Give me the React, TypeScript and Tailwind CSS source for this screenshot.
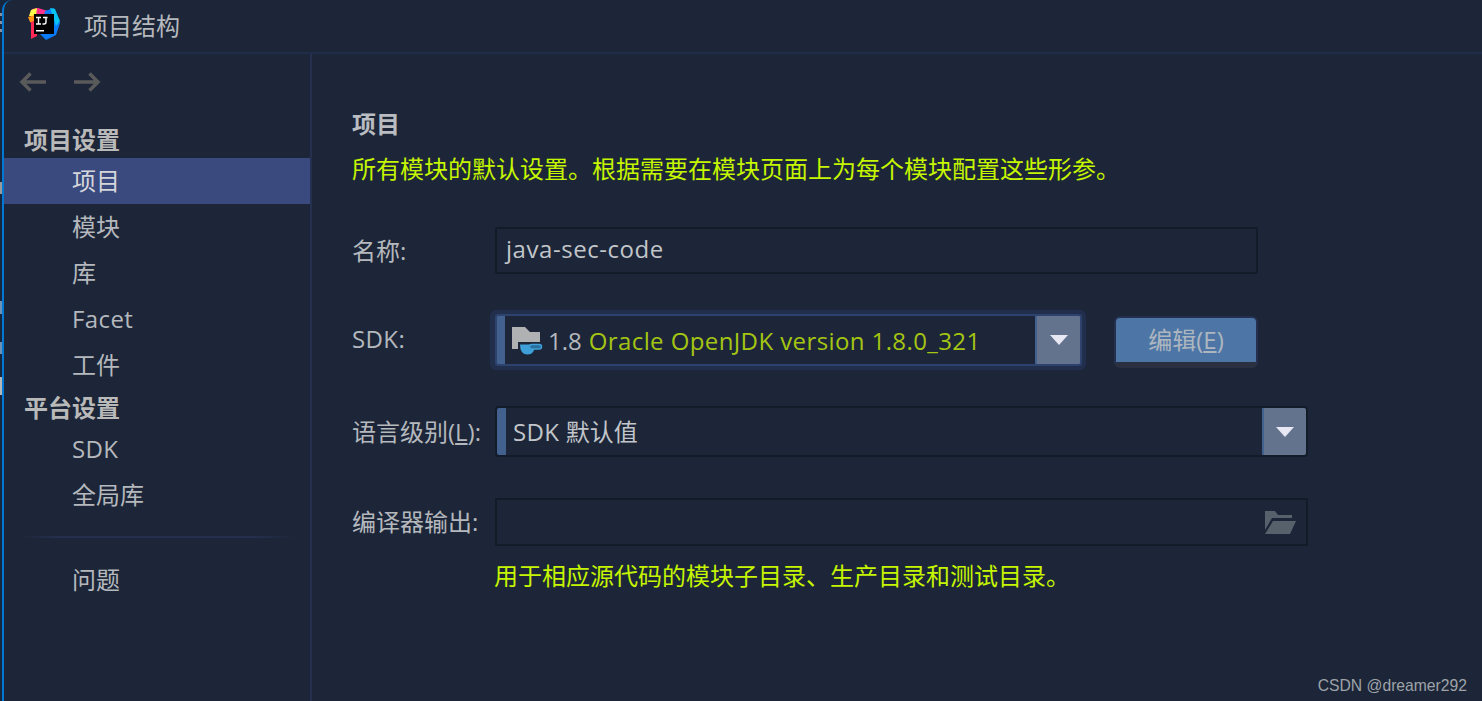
import React from "react";

const cjk = '"Open Sans", "Noto Sans CJK SC", sans-serif';

function Logo() {
  return (
    <svg width="32" height="32" viewBox="0 0 32 32">
      <polygon points="4,1 10,0 20,3 18,10 6,10" fill="#ff318c" />
      <polygon points="3,2 9,0 8,8 1,8" fill="#fcf84a" />
      <polygon points="0,9 7,7 7,17 2,14" fill="#ff9419" />
      <polygon points="3,14 9,12 9,28 3,31" fill="#fe2857" />
      <polygon points="17,3 26,0 32,15 28,27 18,32 12,26" fill="#087cfa" />
      <polygon points="22,0 27,1 32,13 28,18" fill="#07c3f2" />
      <rect x="6" y="6" width="20" height="20" fill="#000" />
      <rect x="8" y="22" width="8" height="1.5" fill="#fff" />
      <path d="M8 9.500h5M10.500 9.500v6.500M8 16h5M15 9.500h4.500M18 9.500v4.500q0 2-2 2h-1.500" fill="none" stroke="#fff" strokeWidth="1.400" />
    </svg>
  );
}

function Arrow({ flip }: { flip?: boolean }) {
  return (
    <svg width="28" height="22" viewBox="0 0 28 22" style={flip ? { transform: "scaleX(-1)" } : undefined}>
      <path d="M28 11H4M12.500 2.500 4 11l8.500 8.500" fill="none" stroke="#5a5a5a" strokeWidth="3.500" />
    </svg>
  );
}

function Caret() {
  return (
    <svg width="18" height="10" viewBox="0 0 18 10">
      <polygon points="0,0 18,0 9,10" fill="#e8e8f4" />
    </svg>
  );
}

function SdkIcon() {
  return (
    <svg width="32" height="30" viewBox="0 0 32 30">
      <path d="M1 1h13l5 5h10v17H1z" fill="#afb1b3" />
      <path d="M7 16h25v8H26q-2 6-9 6t-10-7z" fill="#1c2638" />
      <path d="M9 18.500h15q0 10-7.500 10T9 18.500z" fill="#3f9fd8" />
      <rect x="18.500" y="18.500" width="12" height="4.500" rx="2.250" fill="#2a6f9c" stroke="#3f9fd8" strokeWidth="1.500" />
    </svg>
  );
}

function OpenFolder() {
  return (
    <svg width="31" height="23" viewBox="0 0 31 23">
      <path d="M0 0h10l3 4h14v3H7L0 19z" fill="#56616b" />
      <path d="M8 10h23l-6 13H0z" fill="#56616b" />
    </svg>
  );
}

function NavItem({ text, active, latin }: { text: string; active?: boolean; latin?: boolean }) {
  return (
    <div className={`h-[46px] pl-[68px] flex items-center text-[24px] ${latin ? "tracking-[0.4px]" : ""} ${active ? "bg-[#3a4a7e] text-[#d4d6dc]" : "text-[#b5b8bd]"}`}>
      {text}
    </div>
  );
}

function Head({ text }: { text: string }) {
  return <div className="h-[38px] pl-[20px] pt-[2px] flex items-center text-[24px] font-bold text-[#b9b9b9]">{text}</div>;
}

function Label({ children }: { children: React.ReactNode }) {
  return <div className="w-[143px] shrink-0 text-[24px] text-[#b5b8bd] whitespace-nowrap">{children}</div>;
}

export default function App() {
  return (
    <div className="relative w-[1482px] h-[701px] overflow-hidden bg-[#17263f] flex pl-[2px]" style={{ fontFamily: cjk }}>
      <div className="absolute left-0 top-[13px] w-[2px] h-[3px] bg-[#8a919c]" />
      <div className="absolute left-0 top-[21px] w-[2px] h-[3px] bg-[#8a919c]" />
      <div className="absolute left-0 top-[29px] w-[2px] h-[3px] bg-[#8a919c]" />
      <div className="absolute left-0 top-[182px] w-[2px] h-[12px] bg-[#9a9a98]" />
      <div className="absolute left-0 top-[301px] w-[2px] h-[13px] bg-[#6f93b5]" />
      <div className="absolute left-0 top-[342px] w-[2px] h-[12px] bg-[#6f93b5]" />
      <div className="absolute left-0 top-[377px] w-[2px] h-[18px] bg-[#b4b6b8]" />
      <div className="flex-1 flex flex-col min-w-0 bg-[#1c2638] border-l-2 border-[#0078d4] rounded-tl-[10px]">
        <header className="h-[54px] shrink-0 border-b-2 border-[#1f2d49] flex items-center pl-[24px] gap-[24px]">
          <div className="-mt-[4px]"><Logo /></div>
          <span className="text-[24px] text-[#b5b8bd]">项目结构</span>
        </header>
        <div className="flex-1 flex min-h-0">
          <aside className="w-[308px] shrink-0 border-r-[2px] border-[#24304e] flex flex-col">
            <div className="h-[66px] pl-[14px] pt-[17px] flex items-start gap-[28px]">
              <Arrow />
              <Arrow flip />
            </div>
            <Head text="项目设置" />
            <NavItem text="项目" active />
            <NavItem text="模块" />
            <NavItem text="库" />
            <NavItem text="Facet" latin />
            <NavItem text="工件" />
            <Head text="平台设置" />
            <NavItem text="SDK" latin />
            <NavItem text="全局库" />
            <div className="mt-[18px] mx-[14px] h-[2px] bg-[linear-gradient(90deg,transparent,#24304e_15%,#24304e_85%,transparent)]" />
            <div className="mt-[19px]">
              <NavItem text="问题" />
            </div>
          </aside>
          <main className="flex-1 pl-[40px] flex flex-col">
            <div className="mt-[52px] h-[36px] flex items-center text-[24px] font-semibold text-[#b9bcc0]">项目</div>
            <div className="mt-[9px] h-[36px] flex items-center text-[24px] text-[#c6f500] whitespace-nowrap">所有模块的默认设置。根据需要在模块页面上为每个模块配置这些形参。</div>

            <div className="mt-[40px] flex items-center h-[47px]">
              <Label>名称:</Label>
              <div className="w-[763px] h-[47px] border-2 border-[#131b29] rounded-[2px] flex items-center pl-[9px] pb-[3px] text-[24px] tracking-[0.55px] text-[#c2c5c9]">java-sec-code</div>
            </div>

            <div className="mt-[36px] flex items-start h-[60px]">
              <div className="w-[138px] shrink-0 h-[58px] flex items-center text-[24px] tracking-[0.4px] text-[#b5b8bd]">SDK:</div>
              <div className="w-[596px] h-[60px] py-[4px] pl-[5px] pr-[4px] rounded-[6px] bg-[#222f4c]">
                <div className="h-full rounded-[3px] border-[2px] border-[#2e426e] flex overflow-hidden bg-[#1c2638]">
                  <div className="w-[8px] bg-[#43618f]" />
                  <div className="flex-1 flex items-center pl-[6px] pt-[2px] text-[24px] whitespace-nowrap">
                    <SdkIcon />
                    <span className="ml-[5px] text-[#b5b8bd]">1.8</span>
                    <span className="ml-[7px] tracking-[0.4px] text-[#a5c513]">Oracle OpenJDK version 1.8.0_321</span>
                  </div>
                  <div className="w-[45px] border-l-2 border-[#43618f] bg-[#63738d] flex items-center justify-center"><Caret /></div>
                </div>
              </div>
              <div className="ml-[28px] w-[144px] h-[52px] mt-[6px] rounded-[6px] border-2 border-[#24304e] border-b-[6px] border-b-[#2b3040] bg-[#4d76a7] flex items-center justify-center text-[24px] text-[#adb6bf]">
                <span>编辑(<span className="underline underline-offset-2">E</span>)</span>
              </div>
            </div>

            <div className="mt-[36px] flex items-center h-[51px]">
              <Label>语言级别(<span className="underline underline-offset-2">L</span>):</Label>
              <div className="w-[813px] h-[51px] rounded-[4px] border-2 border-[#131b29] flex overflow-hidden">
                <div className="w-[9px] bg-[#43618f]" />
                <div className="flex-1 flex items-center pl-[7px] pt-[1px] text-[24px] text-[#c2c5c9]"><span className="tracking-[0.4px]">SDK</span>&nbsp;默认值</div>
                <div className="w-[44px] border-l-2 border-[#43618f] bg-[#63738d] flex items-center justify-center"><Caret /></div>
              </div>
            </div>

            <div className="mt-[41px] flex items-center h-[48px]">
              <Label>编译器输出:</Label>
              <div className="w-[813px] h-[48px] border-2 border-[#131b29] flex items-center justify-end pr-[10px]"><OpenFolder /></div>
            </div>

            <div className="mt-[12px] ml-[142px] h-[36px] flex items-center text-[24px] text-[#c6f500] whitespace-nowrap">用于相应源代码的模块子目录、生产目录和测试目录。</div>
          </main>
        </div>
      </div>
      <div className="absolute right-[15px] top-[674px] text-[15.7px] text-[#9fa3a8] whitespace-nowrap" style={{ fontFamily: '"Liberation Sans", sans-serif' }}>CSDN @dreamer292</div>
    </div>
  );
}
